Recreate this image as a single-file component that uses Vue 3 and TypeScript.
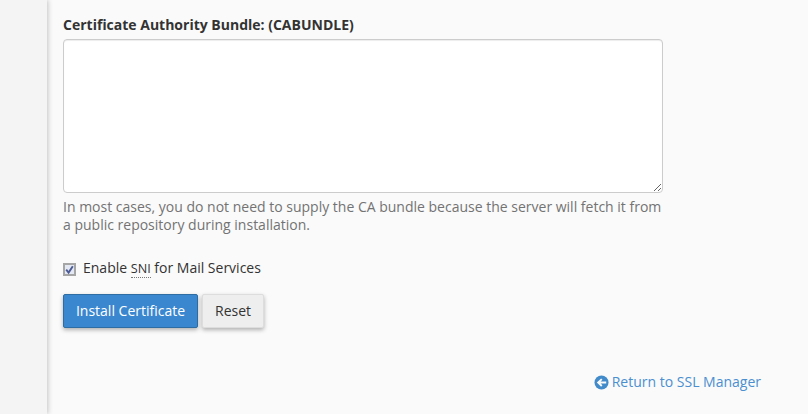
<script setup lang="ts">
</script>

<template>
  <div class="page">
    <aside class="rail"></aside>
    <main class="content">
      <form class="form" @submit.prevent>
        <label class="title" for="cab">Certificate Authority Bundle: (CABUNDLE)</label>
        <textarea id="cab" class="area"></textarea>
        <p class="help">In most cases, you do not need to supply the CA bundle because the server will fetch it from a public repository during installation.</p>
        <label class="check">
          <span class="box">
            <input type="checkbox" checked />
            <svg class="tick" viewBox="0 0 13 13" width="13" height="13" aria-hidden="true">
              <path d="M3.2 6.6 L5.6 9.6 L9.8 3.2" fill="none" stroke="#4a5a94" stroke-width="1.9" />
            </svg>
          </span>
          <span>Enable <abbr title="Server Name Indication">SNI</abbr> for Mail Services</span>
        </label>
        <div class="actions">
          <button class="btn primary" type="submit">Install Certificate</button>
          <button class="btn plain" type="reset">Reset</button>
        </div>
      </form>
      <div class="back">
        <a href="#">
          <svg class="icon" viewBox="0 0 16 16" width="15" height="15" aria-hidden="true">
            <circle cx="8" cy="8" r="7.5" fill="#428bca" />
            <path d="M3 8 L7.6 3.6 L9 5 L7 7 H13 V9 H7 L9 11 L7.6 12.4 Z" fill="#fafafa" />
          </svg>
          Return to SSL Manager
        </a>
      </div>
    </main>
  </div>
</template>

<style>
html, body { margin: 0; padding: 0; background: #fafafa; }
</style>

<style scoped>
.page {
  display: flex;
  width: 808px;
  height: 414px;
  overflow: hidden;
  font-family: "Open Sans", sans-serif;
  font-size: 14px;
  line-height: 20px;
  color: #333;
  background: #fafafa;
}
.rail {
  width: 47px;
  flex: none;
  background: #f4f4f4;
  box-shadow: 1px 0 5px rgba(0, 0, 0, 0.22);
}
.content {
  flex: 1;
  padding: 15px 47px 0 16px;
  min-width: 0;
}
.form { width: 600px; }
.title {
  display: block;
  font-weight: 700;
  margin-bottom: 4px;
}
.area {
  display: block;
  box-sizing: border-box;
  width: 600px;
  height: 154px;
  border: 1px solid #ccc;
  border-radius: 4px;
  background: #fff;
  box-shadow: inset 0 1px 1px rgba(0, 0, 0, 0.075);
  padding: 6px 12px;
  margin: 0;
}
.help {
  margin: 5px 0 0;
  line-height: 18px;
  color: #737373;
}
.check {
  display: flex;
  align-items: center;
  gap: 7px;
  margin-top: 24px;
  height: 20px;
}
.box {
  position: relative;
  display: block;
  width: 13px;
  height: 13px;
  margin-top: 3px;
}
.box input {
  appearance: none;
  display: block;
  box-sizing: border-box;
  width: 13px;
  height: 13px;
  margin: 0;
  border: 2px solid #a6a6a6;
  background: #e4e8f2;
}
.tick {
  position: absolute;
  inset: 0;
  pointer-events: none;
}
abbr {
  font-size: 90%;
  text-decoration: none;
  border-bottom: 1px dotted #777;
}
.actions {
  display: flex;
  gap: 4px;
  margin-top: 16px;
}
.btn {
  box-sizing: border-box;
  height: 34px;
  font: inherit;
  white-space: nowrap;
  border-radius: 2px;
  border: 1px solid transparent;
  padding: 6px 0;
  box-shadow: 0 2px 4px rgba(0, 0, 0, 0.3);
}
.primary {
  width: 135px;
  background: #3a87cf;
  border-color: #2e6da4;
  color: #fff;
}
.plain {
  width: 62px;
  background: #eee;
  border-color: #ddd;
  color: #333;
}
.back {
  display: flex;
  justify-content: flex-end;
  margin-top: 44px;
}
.back a {
  display: inline-flex;
  align-items: center;
  gap: 3px;
  color: #4a8fd0;
  text-decoration: none;
}
</style>
